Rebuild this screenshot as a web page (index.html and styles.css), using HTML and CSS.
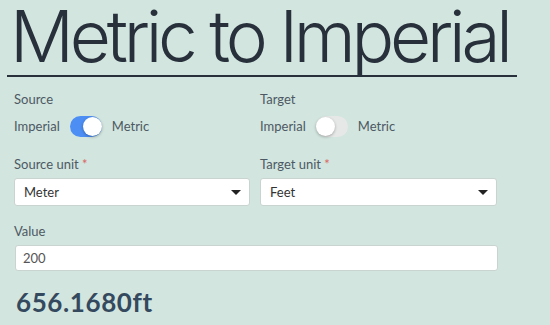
FILE: index.html
```html
<!DOCTYPE html>
<html lang="en">
<head>
  <meta charset="UTF-8" />
  <title>Metric to Imperial</title>
  <meta name="viewport" content="width=device-width, initial-scale=1.0"/>
  <link rel="stylesheet" href="styles.css">
</head>
<body>
  <div class="page">
    <h1 class="title">Metric to Imperial</h1>

    <form class="converter">
      <div class="field">
        <span class="field-label">Source</span>
        <div class="switch-row">
          <span>Imperial</span>
          <span class="switch on"><span class="knob"></span></span>
          <span>Metric</span>
        </div>
      </div>

      <div class="field">
        <span class="field-label">Target</span>
        <div class="switch-row">
          <span>Imperial</span>
          <span class="switch"><span class="knob"></span></span>
          <span>Metric</span>
        </div>
      </div>

      <div class="field unit">
        <label class="field-label">Source unit <span class="req">*</span></label>
        <div class="select-box">
          <span>Meter</span>
          <span class="caret"></span>
        </div>
      </div>

      <div class="field unit">
        <label class="field-label">Target unit <span class="req">*</span></label>
        <div class="select-box">
          <span>Feet</span>
          <span class="caret"></span>
        </div>
      </div>

      <div class="field wide">
        <label class="field-label" for="valueInput">Value</label>
        <input id="valueInput" class="text-input" type="text" value="200" />
      </div>
    </form>

    <div class="result">656.1680ft</div>
  </div>
</body>
</html>
```

FILE: styles.css
```css
:root {
  --bg: #d2e5de;
  --ink: #27303b;
  --label: #4d5964;
  --accent: #4c8ef4;
}

body {
  margin: 0;
  background: var(--bg);
  font-family: Lato, 'Noto Sans', sans-serif;
  color: var(--label);
}

.page {
  padding: 0 7px;
  width: 510px;
}

.title {
  margin: 0;
  padding: 0 0 3px 3px;
  font-family: Inter, sans-serif;
  font-weight: 300;
  font-size: 71px;
  line-height: 72px;
  letter-spacing: -4.2px;
  white-space: nowrap;
  color: var(--ink);
  border-bottom: 2px solid var(--ink);
}

.converter {
  display: grid;
  grid-template-columns: 236px 237px;
  column-gap: 10px;
  row-gap: 16px;
  padding: 13px 7px 0;
}

.field {
  display: flex;
  flex-direction: column;
  font-size: 13px;
}

.field.unit {
  margin-top: 2px;
}

.field.wide {
  grid-column: 1 / 3;
}

.field-label {
  line-height: 18px;
  margin-bottom: 5px;
}

.req {
  color: #dc6464;
}

.switch-row {
  display: flex;
  align-items: center;
  gap: 10px;
  height: 22px;
  margin-top: 2px;
}

.switch {
  position: relative;
  width: 32px;
  height: 21px;
  border-radius: 11px;
  background: #e6e8e7;
}

.switch .knob {
  position: absolute;
  top: 1px;
  left: 0;
  width: 19px;
  height: 19px;
  border-radius: 50%;
  background: #fff;
  box-shadow: 0 1px 3px rgba(0, 0, 0, 0.3);
}

.switch.on {
  background: var(--accent);
}

.switch.on .knob {
  left: 13px;
}

.select-box {
  display: flex;
  align-items: center;
  justify-content: space-between;
  height: 26px;
  padding: 0 8px 0 9px;
  background: #fff;
  border: 1px solid #c9d3d0;
  border-radius: 3px;
  color: #333;
}

.caret {
  width: 0;
  height: 0;
  border-left: 5px solid transparent;
  border-right: 5px solid transparent;
  border-top: 5px solid #222;
}

.text-input {
  width: 483px;
  height: 26px;
  box-sizing: border-box;
  margin-left: 1px;
  padding: 0 7px;
  border: 1px solid #c9d3d0;
  border-radius: 3px;
  font-family: Lato, sans-serif;
  font-size: 13px;
  color: #555;
  outline: none;
}

.result {
  padding: 15px 0 0 9px;
  font-size: 26px;
  font-weight: 700;
  letter-spacing: 0.6px;
  color: #34495e;
}
```
